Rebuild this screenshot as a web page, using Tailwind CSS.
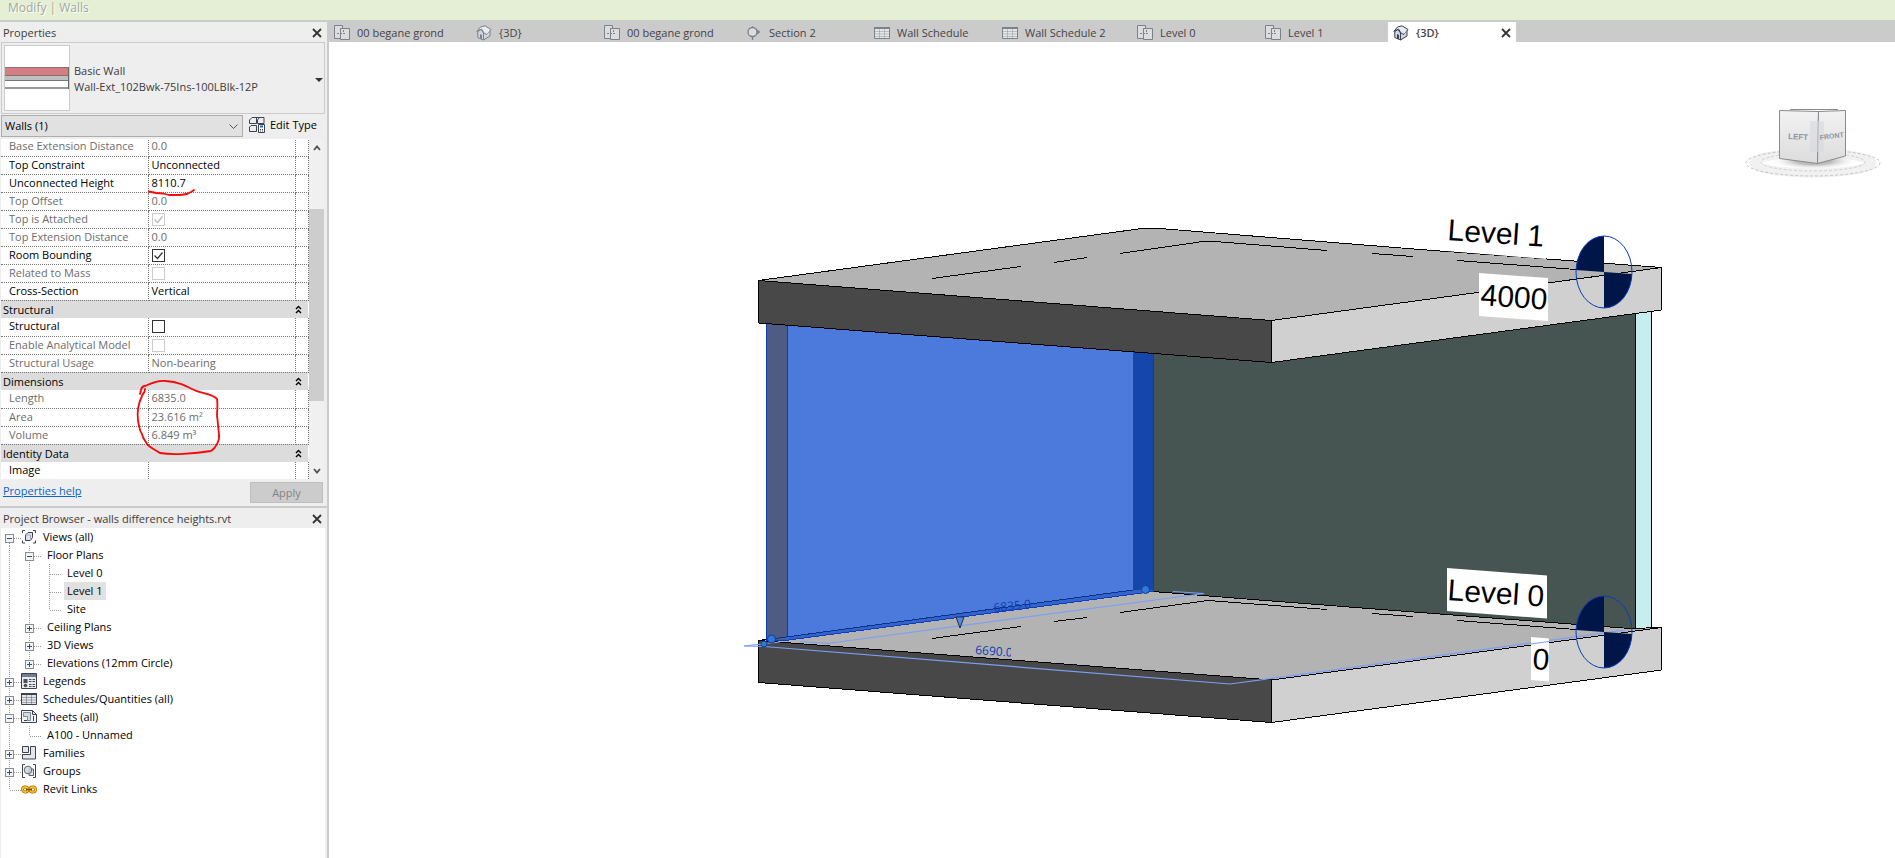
<!DOCTYPE html>
<html lang="en">
<head>
    <meta charset="UTF-8">
    <title>Modify | Walls</title>
    <script src="https://cdn.jsdelivr.net/npm/@tailwindcss/browser@4"></script>
</head>
<body class="h-screen flex flex-col overflow-hidden bg-white font-['Open_Sans',sans-serif] text-[11px] leading-[18px] text-black">
    <!-- Icons shared by the tabs and the tree -->
    <svg class="hidden">
        <symbol id="i-plan" viewBox="0 0 16 16">
            <path d="M.5 .5h8v3h-2v10h-6z" fill="#dcdde0" stroke="#7d8188"/>
            <path d="M6.500 3.500h9v11h-9z" fill="#dcdde0" stroke="#7d8188"/>
            <path d="M3 8.500h9M9.500 5v4" fill="none" stroke="#7d8188" stroke-dasharray="2 1"/>
        </symbol>
        <symbol id="i-house" viewBox="0 0 16 16">
            <path d="M1.500 6 6 1.500 14 4v7l-6 4-6-2.500z" fill="#cfd6df"/>
            <path d="M.8 6.500 4.500 2 9 .8 15 4.500 11 9.500 8 8 5.500 4z" fill="#e9edf2" stroke="currentColor" stroke-linejoin="round"/>
            <path d="M1.800 6.500V12.500L7.500 15V8L5 4.500zM7.500 15 14 11V5.500" fill="#cfd6df" stroke="currentColor" stroke-linejoin="round"/>
            <path d="M4 9v4.500l2 .8V10z" fill="currentColor"/>
        </symbol>
        <symbol id="i-section" viewBox="0 0 16 16">
            <path d="M6 1l8.500 6L6 13z" fill="#7d8188"/>
            <circle cx="6.500" cy="7" r="4.500" fill="#dcdde0" stroke="#7d8188" stroke-width="1.300"/>
            <path d="M6.500 11v4" stroke="#7d8188" stroke-width="1.300"/>
        </symbol>
        <symbol id="i-sched" viewBox="0 0 16 16">
            <path d="M.5 2.500h15v11H.5z" fill="#e4e6e9" stroke="currentColor"/>
            <path d="M0 2h16v2H0z" fill="currentColor"/>
            <path d="M1 6.500h14M1 9h14M1 11.500h14M5.500 4v9M10.500 4v9" stroke="currentColor" stroke-opacity=".4"/>
        </symbol>
        <symbol id="i-views" viewBox="0 0 16 16">
            <path d="M1.500 4V1.500H4M12 1.500h2.500V4M14.500 11.500V14H12M4 14H1.500v-2.500" fill="none" stroke="#3c4350"/>
            <path d="M4.500 6 7 3.500h4.500v5L9.500 11.500h-5z" fill="#dfe3e8" stroke="#3c4350" stroke-linejoin="round"/>
            <path d="M4.500 6h5v5.500" fill="none" stroke="#aab0b8"/>
        </symbol>
        <symbol id="i-legend" viewBox="0 0 16 16">
            <path d="M.5.500h15v15H.5z" fill="#e8eaee" stroke="#3c4350"/>
            <path d="M1 1h14v3H1z" fill="#6f7f92"/>
            <path d="M2.500 6h4v4h-4z" fill="#4a4f58"/><circle cx="4.500" cy="12.500" r="1.800" fill="#4a4f58"/>
            <path d="M8 6.500h6M8 8.500h6M8 11.500h6M8 13.500h6" stroke="#4a4f58" stroke-dasharray="2.500 1"/>
        </symbol>
        <symbol id="i-sheet" viewBox="0 0 16 16">
            <path d="M.5 1.500h11l4 4v8H.5z" fill="#f3f4f6" stroke="#3c4350"/>
            <path d="M2.500 3.500h7v8h-3v-4h-4z" fill="#d5dae0" stroke="#7f8894"/>
            <path d="M11.500 1.500v4h4M12.500 7v5M3 11.500h3" fill="none" stroke="#3c4350"/>
        </symbol>
        <symbol id="i-family" viewBox="0 0 16 16">
            <path d="M1.500 1.500h6v6h-6z" fill="#e3e7ec" stroke="#3c4350"/>
            <path d="M9.500 1.500h5v12.500h-13V9.500h8z" fill="#e3e7ec" stroke="#3c4350"/>
        </symbol>
        <symbol id="i-group" viewBox="0 0 16 16">
            <path d="M4 1.500H1.500v13H4M12 1.500h2.500v13H12" fill="none" stroke="#3c4350"/>
            <path d="M8 6h4.500v6.500H8z" fill="#dfe3e8" stroke="#5c6470"/>
            <circle cx="7" cy="7" r="3.800" fill="#c8d4d8" fill-opacity=".8" stroke="#5c6470"/>
        </symbol>
        <symbol id="i-link" viewBox="0 0 16 16">
            <rect x="1.500" y="6" width="5.500" height="5" rx="2.500" fill="none" stroke="#a86e00" stroke-width="2.800"/>
            <rect x="9" y="6" width="5.500" height="5" rx="2.500" fill="none" stroke="#a86e00" stroke-width="2.800"/>
            <rect x="1.500" y="6" width="5.500" height="5" rx="2.500" fill="none" stroke="#ffc627" stroke-width="1.300"/>
            <rect x="9" y="6" width="5.500" height="5" rx="2.500" fill="none" stroke="#ffc627" stroke-width="1.300"/>
            <path d="M5 8.500h6" stroke="#7a4a00" stroke-width="1.500"/>
        </symbol>
        <symbol id="i-close" viewBox="0 0 10 10">
            <path d="M1 1l8 8M9 1 1 9" stroke="#333" stroke-width="1.800"/>
        </symbol>
        <symbol id="i-up2" viewBox="0 0 7 9">
            <path d="M1 4 3.500 1.500 6 4M1 8l2.500-2.500L6 8" fill="none" stroke="#000" stroke-width="1.400"/>
        </symbol>
    </svg>

    <header class="h-5 shrink-0 bg-[#e5efd6] pl-2 text-[12px] leading-[16px] text-[#a3a89b] [text-shadow:1px_1px_0_#fff]">Modify | Walls</header>

    <div class="flex flex-1 min-h-0">
        <aside class="w-[329px] shrink-0 flex flex-col bg-[#eeeeee] border-t-2 border-r-2 border-[#cbcbcb]">
            <!-- Properties -->
            <section class="shrink-0 border-b-2 border-[#cbcbcb]">
                <div class="h-5 flex items-center justify-between pl-[3px] pr-[5px] pt-px text-[#3c3c3c]">
                    <h2>Properties</h2>
                    <button aria-label="Close Properties"><svg class="size-[10px]"><use href="#i-close"/></svg></button>
                </div>
                <button class="relative w-[324px] h-[72px] ml-px flex items-center gap-1 border border-[#cbcbcb] pl-[2px] text-left text-[#3c3c3c]">
                    <svg class="w-[66px] h-[66px] shrink-0" viewBox="0 0 66 66" shape-rendering="crispEdges">
                        <path d="M.5.500h65v65H.5z" fill="#fff" stroke="#cbcbcb"/>
                        <path d="M1 22h64v8H1z" fill="#d67c82"/><path d="M1 31h64v4H1z" fill="#bfbfbf"/>
                        <path d="M1 22.500h64M1 30.500h64M1 35.500h64" stroke="#777"/>
                        <path d="M1 42.500h64" stroke="#999" stroke-width="2"/><path d="M64.500 22v22" stroke="#666"/>
                    </svg>
                    <span class="leading-4 pt-[2px]">Basic Wall<br>Wall-Ext_102Bwk-75Ins-100LBlk-12P</span>
                    <svg class="absolute right-[1px] top-[35px] w-2 h-1" viewBox="0 0 8 4"><path d="M0 0h8L4 4z" fill="#333"/></svg>
                </button>
                <div class="h-[25px] flex items-start ml-px pt-px">
                    <div class="relative w-[242px]">
                        <select aria-label="Element filter" class="appearance-none block w-full h-[22px] bg-[#e1e1e1] border border-[#adadad] pl-[3px] leading-5">
                            <option>Walls (1)</option>
                        </select>
                        <svg class="absolute right-[5px] top-[9px] w-[9px] h-[6px] pointer-events-none" viewBox="0 0 9 6"><path d="M.5.500l4 4 4-4" fill="none" stroke="#555"/></svg>
                    </div>
                    <button class="flex items-center gap-[5px] ml-[6px] pt-px">
                        <svg class="size-4" viewBox="0 0 16 16" fill="none" stroke="#3c4350">
                            <path d="M.5 3 3 .5h4.500v6h-7zM8.500 3 10.500.5h4.500v6H8.500zM.5 10 2 8.500h5.500v6h-7zM3 .5h11" fill="#eceef1" stroke-linejoin="round"/>
                            <path d="M9.500 7.500h6v8h-6z" fill="#fff"/><path d="M11 9.500h3" stroke="#2563b8" stroke-width="2"/><path d="M11 12.500h3M11 14h3" stroke-dasharray="1 1"/>
                        </svg>
                        Edit Type
                    </button>
                </div>

                <div class="relative flex ml-px h-[340px]">
                    <div class="w-[308px] h-full overflow-hidden bg-white">
                        <table class="w-[307px] -mt-px table-fixed border-collapse">
                            <colgroup><col class="w-[147px]"><col class="w-[147px]"><col class="w-[13px]"></colgroup>
                            <tbody id="props"></tbody>
                        </table>
                    </div>
                    <div class="w-[15px] flex flex-col items-center bg-[#f0f0f0]">
                        <button aria-label="Scroll up" class="h-[17px] shrink-0"><svg class="w-2 h-[6px]" viewBox="0 0 8 6"><path d="M1 5l3-3.500L7 5" fill="none" stroke="#505050" stroke-width="1.800"/></svg></button>
                        <div class="w-full h-[192px] mt-[53px] bg-[#cdcdcd]"></div>
                        <button aria-label="Scroll down" class="h-[17px] mt-auto shrink-0"><svg class="w-2 h-[6px]" viewBox="0 0 8 6"><path d="M1 1l3 3.500L7 1" fill="none" stroke="#505050" stroke-width="1.800"/></svg></button>
                    </div>
                    <!-- Red pen marks -->
                    <svg class="absolute left-0 top-0 w-[308px] h-[340px] pointer-events-none" viewBox="1 139 308 340" fill="none" stroke="#f80808" stroke-width="1.800" stroke-linecap="round" stroke-linejoin="round">
                        <path d="M149 191.500 156 193 163 193.500 169 195 180 195 187 194 191 192 194 190"/>
                        <path d="M145 389c0 4 -2 4 -3 7-4 8-5 17-4 25 2 8 1 9 4 13 1 6 4 7 5 10 3 4 9 6 13 9 12 2 34 1 51-2 5-3 9-11 8-17-1-7-1-12-2-18 0-6 1-11 0-17-6-6-16-5-25-10-8-4-14-7-26-8-8-1-14 2-21 5-4 0-4 4-5 8"/>
                    </svg>
                </div>

                <div class="h-[27px] flex items-center justify-between pl-[3px] pr-1">
                    <a href="#" class="pb-[3px] text-[#0a66c8] underline">Properties help</a>
                    <button disabled class="w-[73px] h-[21px] bg-[#cccccc] border border-[#bfbfbf] text-[#838383]">Apply</button>
                </div>
            </section>

            <!-- Project Browser -->
            <section class="flex-1 min-h-0 flex flex-col pr-[2px]">
                <div class="h-5 shrink-0 flex items-center justify-between pl-[3px] pr-[3px] pt-px text-[#3c3c3c]">
                    <h2>Project Browser - walls difference heights.rvt</h2>
                    <button aria-label="Close Project Browser"><svg class="size-[10px]"><use href="#i-close"/></svg></button>
                </div>
                <ul id="tree" class="flex-1 ml-px bg-white"></ul>
            </section>
        </aside>

        <main class="flex-1 min-w-0 flex flex-col">
            <nav id="tabs" class="h-[22px] shrink-0 flex bg-[#cbcbcb] pt-[2px] text-[#444444]"></nav>

            <div class="flex-1 min-h-0 overflow-hidden">
                <svg class="w-full h-full" viewBox="329 42 1566 816" preserveAspectRatio="xMinYMin meet">
                    <defs>
                        <linearGradient id="face" x1="0" y1="0" x2="0" y2="1"><stop offset="0" stop-color="#f2f2f2"/><stop offset="1" stop-color="#dcdcdc"/></linearGradient>
                        <radialGradient id="shade"><stop offset=".4" stop-color="#bbb"/><stop offset="1" stop-color="#fff" stop-opacity="0"/></radialGradient>
                        <clipPath id="clipDim"><path d="M960 630h51v40h-51z"/></clipPath>
                    </defs>

                    <!-- Walls between the slabs -->
                    <g shape-rendering="crispEdges">
                        <path d="M1153 340 1635 300V640L1153 600z" fill="#465452"/>
                        <path d="M1635.500 300H1651.500V634H1635.500z" fill="#c7eeee" stroke="#000"/>
                    </g>

                    <!-- Lower slab -->
                    <g shape-rendering="crispEdges" stroke="#000" stroke-linejoin="round">
                        <path d="M758.500 640.500 1153 591.500 1240 598.500 1420 612.500 1630 628.500 1661.500 627.500 1271.500 680z" fill="#b3b3b3"/>
                        <path d="M758.500 640.500 1271.500 680V722.500L758.500 682.500z" fill="#484848"/>
                        <path d="M1271.500 680 1661.500 627.500V670L1271.500 722.500z" fill="#d0d0d0"/>
                        <path d="M932 638.500 1021 626.500M1054 621.500 1087 617.500M1120 612.500 1208 600.500 1327 609.500M1372 613.500 1413 616.500M1457 620.500 1576 629.500" fill="none"/>
                    </g>

                    <!-- Selected wall -->
                    <g shape-rendering="crispEdges">
                        <path d="M766.500 320H787.500V640.500H766.500z" fill="#4e5b82" stroke="#0a3cb4"/>
                        <path d="M788 320H1133V590L788 638z" fill="#4c7adc"/>
                        <path d="M1133 340H1153.500V591.500H1133z" fill="#1446ac"/>
                        <path d="M1153.500 340V591.500" stroke="#0a3cb4"/>
                        <path d="M780 638 1133 590H1153V592L788 640.500z" fill="#3464c8"/>
                        <path d="M768 639.500 1133 590" stroke="#0a328c"/>
                        <path d="M785 640.500 1153 591.500" stroke="#0a3cc8"/>
                    </g>

                    <!-- Upper slab -->
                    <g shape-rendering="crispEdges" stroke="#000" stroke-linejoin="round">
                        <path d="M758.500 280.500 1142 228.500H1160L1240 235 1420 249.500 1661.500 267.500 1271.500 320.500z" fill="#b3b3b3"/>
                        <path d="M758.500 280.500 1271.500 320.500V362.500L758.500 323z" fill="#484848"/>
                        <path d="M1271.500 320.500 1661.500 267.500V310L1271.500 362.500z" fill="#d0d0d0"/>
                        <path d="M932 278.500 1021 266.500M1054 262.500 1087 257.500M1120 253.500 1203 241.500H1215L1327 250.500M1372 253.500 1413 256.500M1457 260.500 1576 269.500" fill="none"/>
                    </g>

                    <!-- Dimension lines and grips -->
                    <g fill="none" stroke="#7c9ff5" stroke-width="1.200">
                        <path d="M744 646 764 646.500 1230 684 1245 682 1625 630"/>
                        <path d="M744 646 780 642M800 641.500 827 643.500 1204 593.500M1173 591.500 1204 593.500"/>
                    </g>
                    <g fill="#2f78dc" stroke="#123c96">
                        <circle cx="771.500" cy="639" r="4"/><circle cx="764" cy="644" r="3"/><circle cx="1145.500" cy="589.500" r="4"/>
                        <path d="M956 617H964L960 628z" fill="#5b86e0" stroke="#1c2a50"/>
                    </g>
                    <g font-family="'Open Sans', sans-serif" font-size="12" fill="#0a3cb4">
                        <text transform="translate(994 612) rotate(-6)">6835.0</text>
                        <g clip-path="url(#clipDim)"><text transform="translate(975 654) rotate(4)">6690.0</text></g>
                    </g>

                    <!-- Level heads -->
                    <g id="head">
                        <path d="M1604 236V272L1576 270A28 36 0 0 1 1604 236zM1604 308V272L1632 274A28 36 0 0 1 1604 308z" fill="#001548"/>
                        <ellipse cx="1604" cy="272" rx="28" ry="36" fill="none" stroke="#0a3cb4"/>
                    </g>
                    <use href="#head" y="360"/>
                    <g fill="#fff">
                        <path d="M1447 208 1546 216V259L1447 251z"/>
                        <path d="M1479 273 1548 278V321L1479 316z"/>
                        <path d="M1447 568 1547 575.500V618.500L1447 611z"/>
                        <path d="M1531 637 1549 638.500V681.500L1531 680z"/>
                    </g>
                    <path d="M1531 644 1549 641.500" stroke="#7c9ff5"/>
                    <g font-family="'Liberation Sans', sans-serif" font-size="30" fill="#000">
                        <text transform="translate(1447 240) rotate(4)">Level 1</text>
                        <text transform="translate(1480 305) rotate(4)">4000</text>
                        <text transform="translate(1447 600) rotate(4)">Level 0</text>
                        <text transform="translate(1532 669) rotate(4)">0</text>
                    </g>

                    <!-- View cube -->
                    <ellipse cx="1813" cy="163" rx="59" ry="10" fill="none" stroke="#f1f1f1" stroke-width="9"/>
                    <ellipse cx="1813" cy="163" rx="67" ry="13" fill="none" stroke="#c4c4c4" stroke-dasharray="3 2"/>
                    <ellipse cx="1813" cy="162" rx="52" ry="9" fill="none" stroke="#cfcfcf" stroke-dasharray="3 2"/>
                    <ellipse cx="1814" cy="161" rx="44" ry="9" fill="url(#shade)"/>
                    <path d="M1779.500 110.500 1818.500 111.500 1817.500 163.500 1779.500 158.500z" fill="url(#face)" stroke="#8a8a8a"/>
                    <path d="M1818.500 111.500 1845.500 110.500V156L1817.500 163.500z" fill="url(#face)" stroke="#8a8a8a"/>
                    <path d="M1790 109.500H1838" stroke="#8a8a8a"/>
                    <path d="M1810 121H1824V152H1810z" fill="#d5d8de" fill-opacity=".6"/>
                    <g font-family="'Liberation Sans', sans-serif" font-weight="bold" fill="#8d949d">
                        <text transform="translate(1788 139) rotate(3)" font-size="8">LEFT</text>
                        <text transform="translate(1820 140) rotate(-7)" font-size="7">FRONT</text>
                    </g>
                </svg>
            </div>
        </main>
    </div>

    <script>
        // [label, value, disabled]; a boolean value is a tick box, a lone label is a group header
        const props = [
            ['Base Extension Distance', '0.0', true],
            ['Top Constraint', 'Unconnected'],
            ['Unconnected Height', '8110.7'],
            ['Top Offset', '0.0', true],
            ['Top is Attached', true, true],
            ['Top Extension Distance', '0.0', true],
            ['Room Bounding', true],
            ['Related to Mass', false, true],
            ['Cross-Section', 'Vertical'],
            ['Structural'],
            ['Structural', false],
            ['Enable Analytical Model', false, true],
            ['Structural Usage', 'Non-bearing', true],
            ['Dimensions'],
            ['Length', '6835.0', true],
            ['Area', '23.616 m²', true],
            ['Volume', '6.849 m³', true],
            ['Identity Data'],
            ['Image', '']
        ];

        function tickBox(checked, disabled, id) {
            return `
                <span class="relative block size-[13px]">
                    <input type="checkbox" aria-labelledby="${id}" ${checked ? 'checked' : ''} ${disabled ? 'disabled' : ''}
                        class="appearance-none block size-[13px] bg-white border border-[#333333] disabled:border-[#cccccc]">
                    ${checked ? `<svg class="absolute inset-0 size-[13px] pointer-events-none" viewBox="0 0 13 13"><path d="M2.500 6.500l3 3 5-6" fill="none" stroke="${disabled ? '#bbb' : '#333'}" stroke-width="1.300"/></svg>` : ''}
                </span>`;
        }

        document.getElementById('props').innerHTML = props.map(([label, value, disabled], i) => {
            if (value === undefined) {
                return `
                    <tr class="h-[18px] bg-[#dcdcdc]">
                        <th colspan="2" class="p-0 pl-[2px] text-left font-normal leading-[17px]">${label}</th>
                        <td class="p-0"><svg class="w-[7px] h-[9px]"><use href="#i-up2"/></svg></td>
                    </tr>`;
            }
            const isBox = typeof value === 'boolean';
            return `
                <tr class="h-[18px] ${disabled ? 'text-[#6d6d6d]' : 'text-black'}">
                    <th id="prop${i}" class="p-0 pl-2 text-left align-top font-normal whitespace-nowrap leading-4 border-b border-r border-dotted border-[#777777]">${label}</th>
                    <td class="p-0 pl-[3px] ${isBox ? 'align-middle' : 'align-top'} leading-4 border-b border-r border-dotted border-[#777777]">${isBox ? tickBox(value, disabled, 'prop' + i) : value}</td>
                    <td class="p-0 border-b border-r border-dotted border-[#777777]"></td>
                </tr>`;
        }).join('');

        // One letter per 20px column: - open, + closed, * closed and last, | line through, t branch, l last branch
        const tree = [
            ['-', 'Views (all)', 'views', 'first'],
            ['|-', 'Floor Plans'],
            ['||t', 'Level 0'],
            ['||t', 'Level 1', '', 'selected'],
            ['||l', 'Site'],
            ['|+', 'Ceiling Plans'],
            ['|+', '3D Views'],
            ['|*', 'Elevations (12mm Circle)'],
            ['+', 'Legends', 'legend'],
            ['+', 'Schedules/Quantities (all)', 'sched'],
            ['-', 'Sheets (all)', 'sheet'],
            ['|l', 'A100 - Unnamed'],
            ['+', 'Families', 'family'],
            ['+', 'Groups', 'group'],
            ['l', 'Revit Links', 'link']
        ];

        function guide(kind, first) {
            const box = '-+*'.includes(kind);
            const top = first ? 9 : 0;
            const bottom = kind === 'l' || kind === '*' ? 10 : 18;
            return `
                <svg class="w-5 h-[18px] shrink-0" viewBox="0 0 20 18" shape-rendering="crispEdges">
                    <path d="M8.500 ${top}V${bottom}" stroke="#999" stroke-dasharray="1 1"/>
                    ${kind !== '|' ? '<path d="M9 10.500h11" stroke="#999" stroke-dasharray="1 1"/>' : ''}
                    ${box ? '<path d="M4.500 6.500h8v8h-8z" fill="#f4f4f4" stroke="#8c8c8c"/><path d="M6 10.500h5" stroke="#2850a0"/>' : ''}
                    ${box && kind !== '-' ? '<path d="M8.500 8v5" stroke="#2850a0"/>' : ''}
                </svg>`;
        }

        document.getElementById('tree').innerHTML = tree.map(([lines, label, icon, state]) => `
            <li class="h-[18px] flex">
                ${[...lines].map(kind => guide(kind, state === 'first')).join('')}
                ${icon ? `<svg class="size-4 mt-px mr-[3px] text-[#3c4350] shrink-0"><use href="#i-${icon}"/></svg>` : ''}
                <span class="px-[3px] ${state === 'selected' ? 'bg-[#e1e1e1]' : ''} ${icon ? '' : 'ml-[3px]'}">${label}</span>
            </li>`).join('');

        const tabs = [
            ['plan', '00 begane grond', 'w-[142px]'],
            ['house', '{3D}', 'w-[128px]'],
            ['plan', '00 begane grond', 'w-[142px]'],
            ['section', 'Section 2', 'w-[128px]'],
            ['sched', 'Wall Schedule', 'w-[128px]'],
            ['sched', 'Wall Schedule 2', 'w-[135px]'],
            ['plan', 'Level 0', 'w-[128px]'],
            ['plan', 'Level 1', 'w-[128px]']
        ];

        document.getElementById('tabs').innerHTML = tabs.map(([icon, label, width]) => `
            <button class="${width} flex items-center gap-[7px] pl-[5px] pt-px whitespace-nowrap">
                <svg class="size-4 text-[#7d8188]"><use href="#i-${icon}"/></svg>${label}
            </button>`).join('') + `
            <div class="w-[128px] flex items-center justify-between bg-white px-[5px] pt-px">
                <button class="flex items-center gap-[7px] font-semibold"><svg class="size-4 text-[#3c4350]"><use href="#i-house"/></svg>{3D}</button>
                <button aria-label="Close view"><svg class="size-[10px]"><use href="#i-close"/></svg></button>
            </div>`;
    </script>
</body>
</html>
